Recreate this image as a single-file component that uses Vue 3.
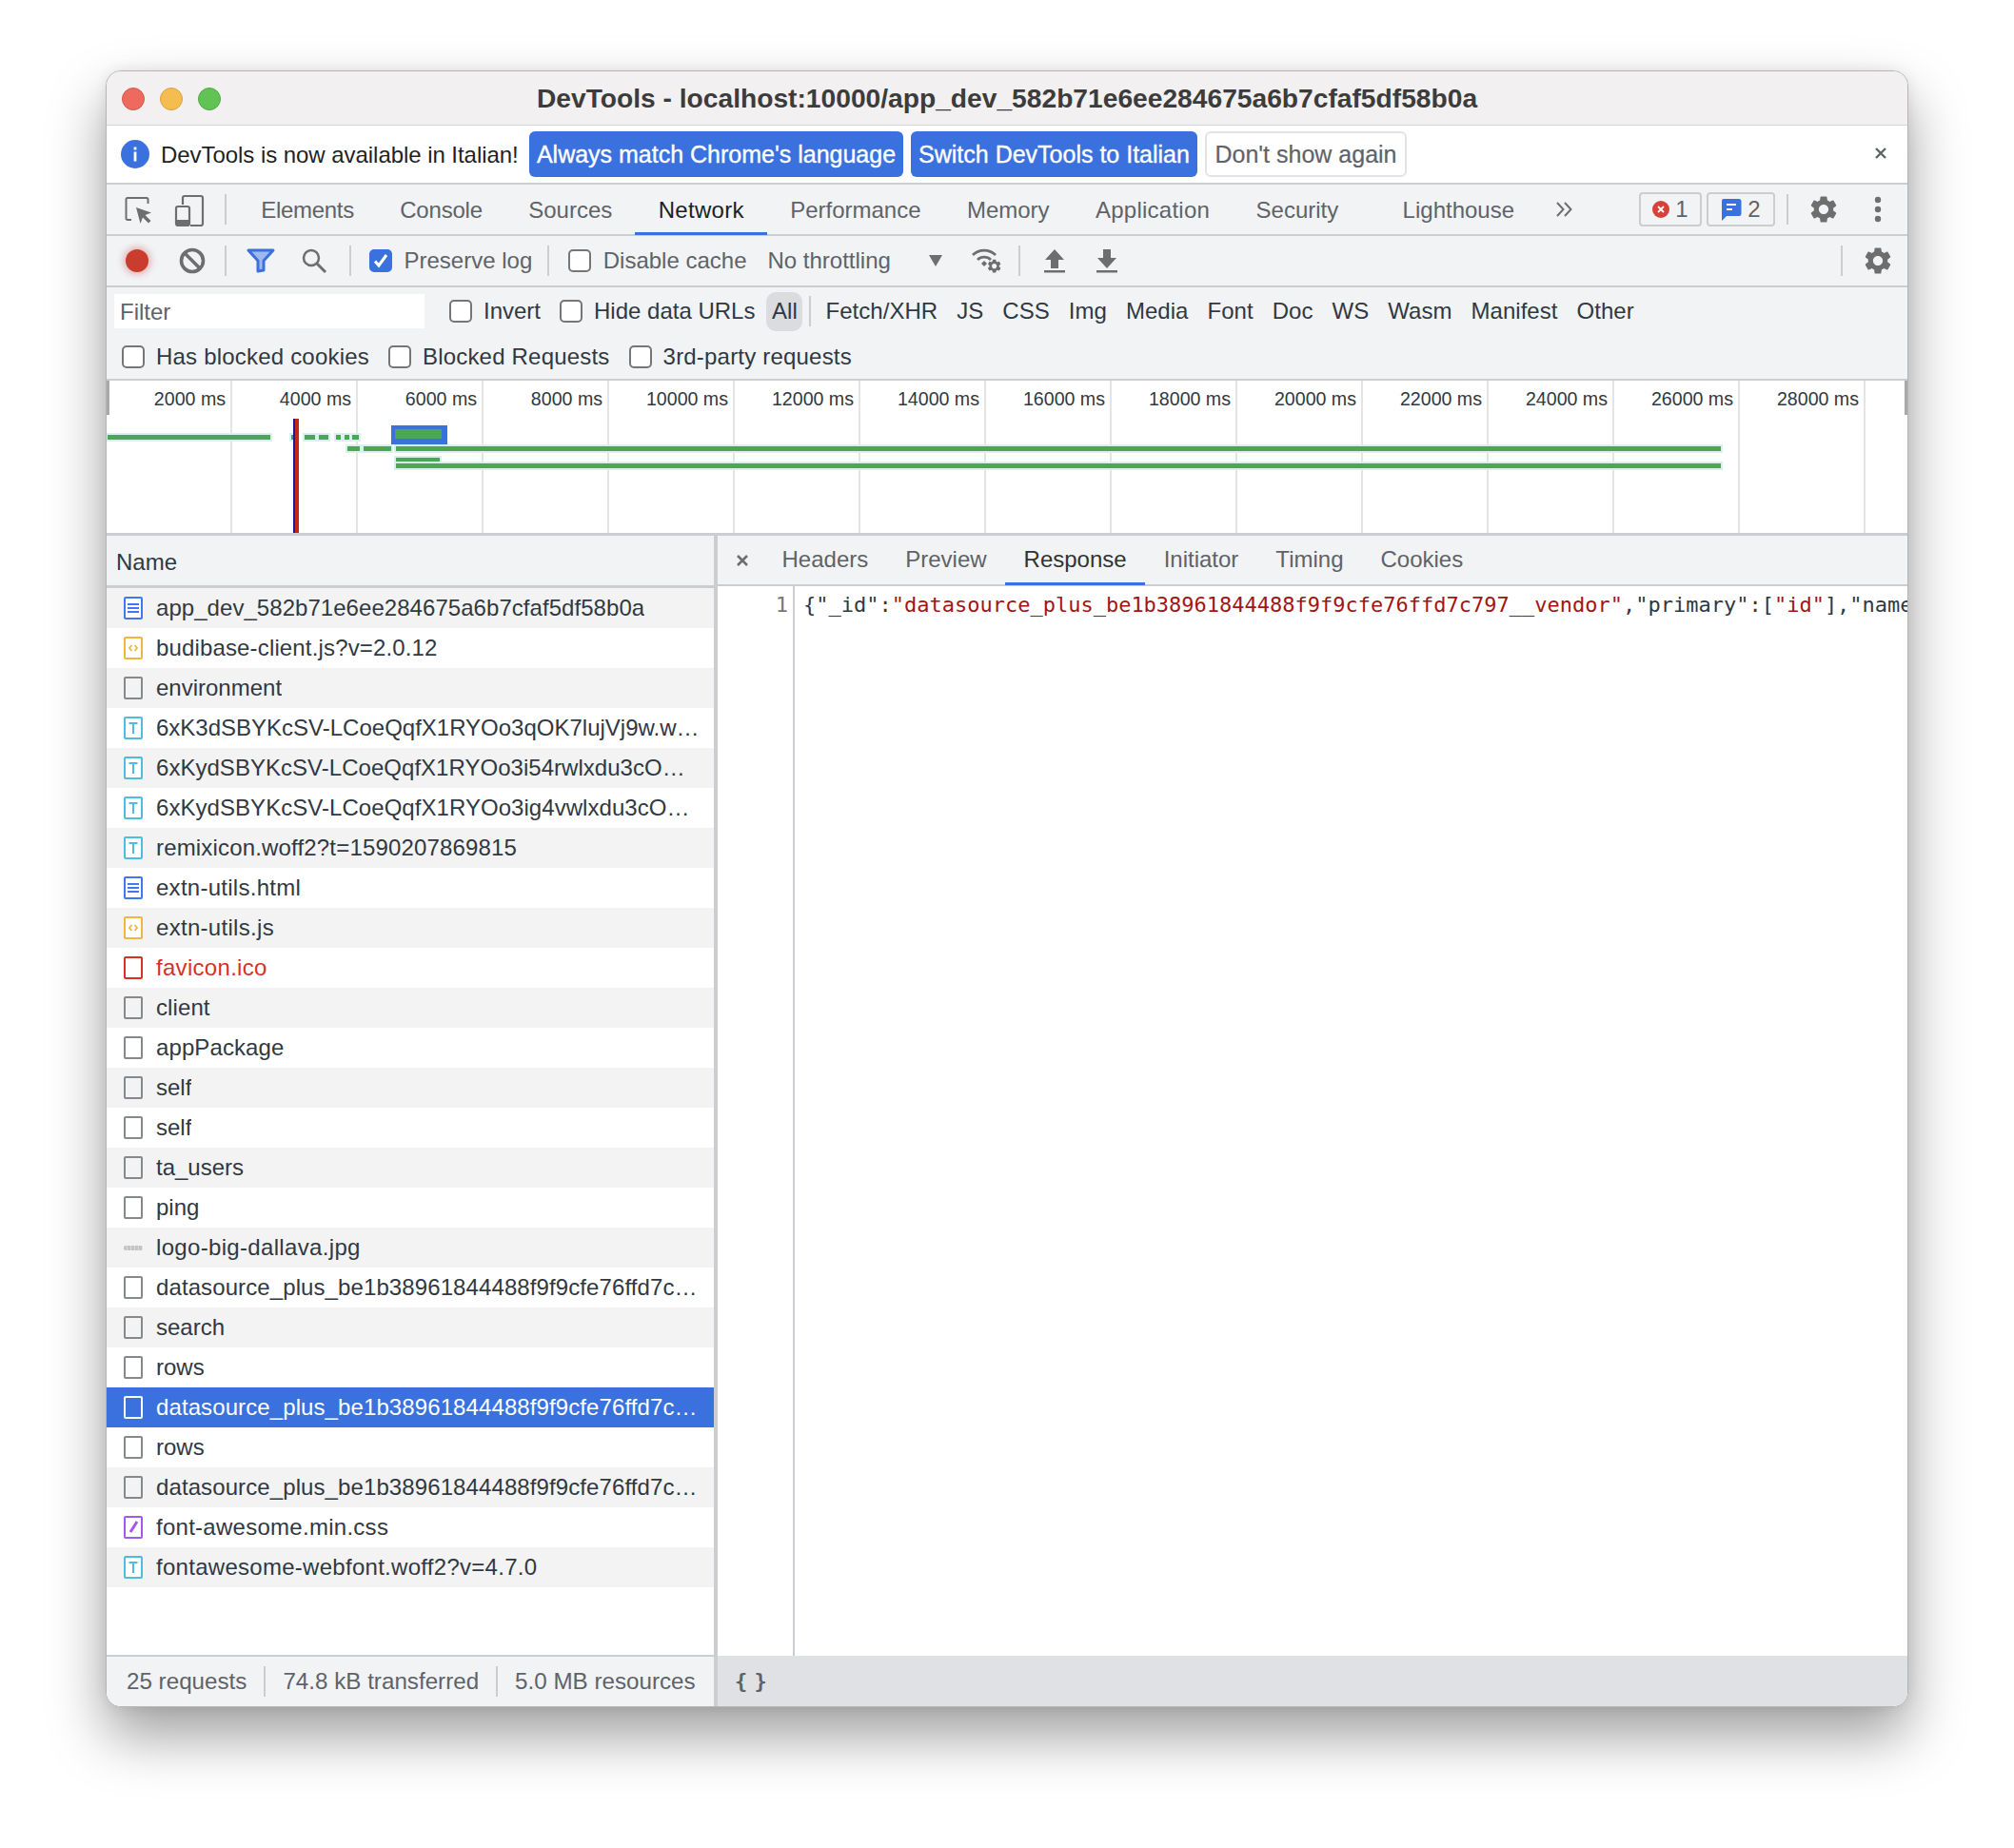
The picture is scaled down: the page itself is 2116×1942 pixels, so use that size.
<script setup>
const tabs = [
  { t: 'Elements', ls: -.3 }, { t: 'Console', ls: -.2 }, { t: 'Sources', ls: 0 }, { t: 'Network', on: true, ls: .3 },
  { t: 'Performance', ls: 0 }, { t: 'Memory', ls: 0 }, { t: 'Application', ls: .25 }, { t: 'Security', ls: 0 }, { t: 'Lighthouse', extra: true, ls: 0 }
]
const chips = ['Fetch/XHR', 'JS', 'CSS', 'Img', 'Media', 'Font', 'Doc', 'WS', 'Wasm', 'Manifest', 'Other']
const ticks = [2000, 4000, 6000, 8000, 10000, 12000, 14000, 16000, 18000, 20000, 22000, 24000, 26000, 28000]
const ds = 'datasource_plus_be1b38961844488f9f9cfe76ffd7c797__vendor'
const rows = [
  ['app_dev_582b71e6ee284675a6b7cfaf5df58b0a', 'doc', .05],
  ['budibase-client.js?v=2.0.12', 'js', .15],
  ['environment', 'plain', 0],
  ['6xK3dSBYKcSV-LCoeQqfX1RYOo3qOK7lujVj9w.woff2', 'font', 0],
  ['6xKydSBYKcSV-LCoeQqfX1RYOo3i54rwlxdu3cOWxw.woff2', 'font', .03],
  ['6xKydSBYKcSV-LCoeQqfX1RYOo3ig4vwlxdu3cOWxw.woff2', 'font', .05],
  ['remixicon.woff2?t=1590207869815', 'font', .17],
  ['extn-utils.html', 'doc', .27],
  ['extn-utils.js', 'js', .3],
  ['favicon.ico', 'err', .3],
  ['client', 'plain', .1],
  ['appPackage', 'plain', .1],
  ['self', 'plain', 0],
  ['self', 'plain', 0],
  ['ta_users', 'plain', 0],
  ['ping', 'plain', 0],
  ['logo-big-dallava.jpg', 'img', .33],
  [ds, 'plain', .1],
  ['search', 'plain', 0],
  ['rows', 'plain', 0],
  [ds, 'sel', .1],
  ['rows', 'plain', 0],
  [ds, 'plain', .1],
  ['font-awesome.min.css', 'css', .27],
  ['fontawesome-webfont.woff2?v=4.7.0', 'font', .28]
]
const bars = [
  { x: 1, y: 57, w: 171 },
  { x: 194, y: 57, w: 3 }, { x: 208, y: 57, w: 11 }, { x: 223, y: 57, w: 10 }, { x: 241, y: 57, w: 5 }, { x: 250, y: 57, w: 5 }, { x: 258, y: 57, w: 7 },
  { x: 253, y: 69, w: 13 }, { x: 270, y: 69, w: 29 }, { x: 304, y: 69, w: 1392 },
  { x: 304, y: 81, w: 46 }, { x: 304, y: 87, w: 1392 }
]
const bar = b => ({ left: b.x + 'px', top: b.y + 'px', width: b.w + 'px' })
const gear = 'M19.14 12.94c.04-.3.06-.61.06-.94 0-.32-.02-.64-.07-.94l2.03-1.58a.49.49 0 0 0 .12-.61l-1.92-3.32a.488.488 0 0 0-.59-.22l-2.39.96c-.5-.38-1.03-.7-1.62-.94l-.36-2.54a.484.484 0 0 0-.48-.41h-3.84c-.24 0-.43.17-.47.41l-.36 2.54c-.59.24-1.13.57-1.62.94l-2.39-.96c-.22-.08-.47 0-.59.22L2.74 8.87c-.12.21-.08.47.12.61l2.03 1.58c-.05.3-.09.63-.09.94s.02.64.07.94l-2.03 1.58a.49.49 0 0 0-.12.61l1.92 3.32c.12.22.37.29.59.22l2.39-.96c.5.38 1.03.7 1.62.94l.36 2.54c.05.24.24.41.48.41h3.84c.24 0 .44-.17.47-.41l.36-2.54c.59-.24 1.13-.56 1.62-.94l2.39.96c.22.08.47 0 .59-.22l1.92-3.32c.12-.22.07-.47-.12-.61l-2.01-1.58zM12 15.6c-1.98 0-3.6-1.62-3.6-3.6s1.62-3.6 3.6-3.6 3.6 1.62 3.6 3.6-1.62 3.6-3.6 3.6z'
</script>

<template>
  <div class="page">
    <div class="win">
      <div class="title">
        <div class="lights"><i class="l r"></i><i class="l y"></i><i class="l g"></i></div>
        <div class="title-text">DevTools - localhost:10000/app_dev_582b71e6ee284675a6b7cfaf5df58b0a</div>
      </div>

      <div class="info">
        <svg class="info-ic" width="30" height="30" viewBox="0 0 30 30"><circle cx="15" cy="15" r="15" fill="#3b71de"/><rect x="13.6" y="12.5" width="2.8" height="10" fill="#fff"/><rect x="13.6" y="7.5" width="2.8" height="3" fill="#fff"/></svg>
        <span class="info-text">DevTools is now available in Italian!</span>
        <span class="btn primary b1">Always match Chrome's language</span>
        <span class="btn primary b2">Switch DevTools to Italian</span>
        <span class="btn plain">Don't show again</span>
        <svg class="info-x" width="14" height="14" viewBox="0 0 14 14"><path d="M2 2l10 10M12 2L2 12" stroke="#5f6368" stroke-width="2.4"/></svg>
      </div>

      <div class="tabs">
        <svg class="ic-inspect" width="30" height="30" viewBox="0 0 30 30"><path d="M7 25H3a1.5 1.5 0 0 1-1.5-1.5V3.500A1.500 1.500 0 0 1 3 2h20a1.500 1.500 0 0 1 1.500 1.500V8" fill="none" stroke="#6e6e6e" stroke-width="2"/><path d="M12 12l16 5.500-6.500 2.500 6 6-2.500 2.500-6-6-2.500 6.500z" fill="#6e6e6e"/></svg>
        <svg class="ic-device" width="32" height="34" viewBox="0 0 32 34"><path d="M9 11V4a2 2 0 0 1 2-2h17a2 2 0 0 1 2 2v27a2 2 0 0 1-2 2H17" fill="none" stroke="#6e6e6e" stroke-width="2.200"/><rect x="2" y="13" width="14" height="20" rx="2" fill="none" stroke="#6e6e6e" stroke-width="2.200"/><rect x="2" y="27" width="14" height="6" fill="#6e6e6e"/></svg>
        <i class="sep first"></i>
        <div v-for="t in tabs" :key="t.t" class="tab" :class="{ on: t.on, extra: t.extra }" :style="{ letterSpacing: t.ls + 'px' }">{{ t.t }}</div>
        <svg class="more" width="20" height="18" viewBox="0 0 20 18"><path d="M2 2l6.500 7L2 16M10 2l6.500 7L10 16" fill="none" stroke="#6e6e6e" stroke-width="2"/></svg>
        <div class="tab-right">
          <span class="badge bd1">
            <svg width="18" height="18" viewBox="0 0 18 18"><circle cx="9" cy="9" r="9" fill="#d9403a"/><path d="M6 6l6 6M12 6l-6 6" stroke="#fff" stroke-width="1.800"/></svg>1
          </span>
          <span class="badge bd2">
            <svg width="22" height="24" viewBox="0 0 22 24"><path d="M3 1h16a2.500 2.500 0 0 1 2.500 2.500v13A2.500 2.500 0 0 1 19 19H6l-5 5V3a2 2 0 0 1 2-2z" fill="#3b71de"/><path d="M6 7h10M6 12h6" stroke="#fff" stroke-width="2"/></svg>2
          </span>
          <i class="sep rs"></i>
          <svg class="gear1" width="34" height="34" viewBox="0 0 24 24"><path :d="gear" fill="#6e6e6e"/></svg>
          <svg class="dots" width="8" height="28" viewBox="0 0 8 28"><circle cx="4" cy="4" r="3.200" fill="#6e6e6e"/><circle cx="4" cy="14" r="3.200" fill="#6e6e6e"/><circle cx="4" cy="24" r="3.200" fill="#6e6e6e"/></svg>
        </div>
      </div>

      <div class="tool">
        <span class="rec"></span>
        <svg class="clear" width="28" height="28" viewBox="0 0 28 28"><circle cx="14" cy="14" r="11.500" fill="none" stroke="#6e6e6e" stroke-width="3.600"/><path d="M6 6l16 16" stroke="#6e6e6e" stroke-width="3.600"/></svg>
        <i class="sep s1"></i>
        <svg class="funnel" width="30" height="26" viewBox="0 0 30 26"><path d="M2 2h26L18 13v10l-6 1V13z" fill="#9db9ee" stroke="#3b71de" stroke-width="3" stroke-linejoin="round"/></svg>
        <svg class="search" width="28" height="28" viewBox="0 0 28 28"><circle cx="11" cy="11" r="8" fill="none" stroke="#6e6e6e" stroke-width="2.500"/><path d="M17 17l9 9" stroke="#6e6e6e" stroke-width="3"/></svg>
        <i class="sep s2"></i>
        <span class="cb checked cb-pres"><svg width="20" height="20" viewBox="0 0 20 20"><path d="M4 10.500l4 4.500 8-11" fill="none" stroke="#fff" stroke-width="3"/></svg></span>
        <span class="tlabel">Preserve log</span>
        <i class="sep s3"></i>
        <span class="cb cb-dis"></span>
        <span class="tlabel">Disable cache</span>
        <span class="tlabel throttle">No throttling</span>
        <svg class="tri" width="14" height="12" viewBox="0 0 14 12"><path d="M0 0h14L7 12z" fill="#6e6e6e"/></svg>
        <svg class="wifi" width="34" height="30" viewBox="0 0 34 30"><path d="M2 9a17 17 0 0 1 24 0M7 14a10 10 0 0 1 14 0" fill="none" stroke="#6e6e6e" stroke-width="2.800"/><path d="M11 18l3-3 3 3-3 3z" fill="#6e6e6e"/><g transform="translate(16 12) scale(.72)"><path :d="gear" fill="#6e6e6e"/></g></svg>
        <i class="sep s4"></i>
        <svg class="up" width="22" height="26" viewBox="0 0 22 26"><path d="M11 1l10 11h-6v9H7v-9H1z" fill="#6e6e6e"/><rect x="0" y="23" width="22" height="2.500" fill="#6e6e6e"/></svg>
        <svg class="down" width="22" height="26" viewBox="0 0 22 26"><path d="M11 21L1 10h6V1h8v9h6z" fill="#6e6e6e"/><rect x="0" y="23" width="22" height="2.500" fill="#6e6e6e"/></svg>
        <div class="tool-right">
          <i class="sep"></i>
          <svg width="34" height="34" viewBox="0 0 24 24"><path :d="gear" fill="#6e6e6e"/></svg>
        </div>
      </div>

      <div class="filters">
        <div class="f-row f1">
          <div class="finput">Filter</div>
          <span class="cb cb-inv"></span><span class="flabel">Invert</span>
          <span class="cb cb-hide"></span><span class="flabel">Hide data URLs</span>
          <span class="all">All</span>
          <i class="sep fs"></i>
          <span v-for="c in chips" :key="c" class="chip">{{ c }}</span>
        </div>
        <div class="f-row f2">
          <span class="cb"></span><span class="flabel">Has blocked cookies</span>
          <span class="cb"></span><span class="flabel">Blocked Requests</span>
          <span class="cb"></span><span class="flabel">3rd-party requests</span>
        </div>
      </div>

      <div class="timeline">
        <div class="ticks">
          <div v-for="t in ticks" :key="t" class="tick">{{ t }} ms</div>
        </div>
        <i class="handle hl"></i><i class="handle hr"></i>
        <i v-for="(b, i) in bars" :key="i" class="bar" :style="bar(b)"></i>
        <i class="sel-box"><i class="sel-in"></i></i>
        <i class="mark"></i>
      </div>

      <div class="split">
        <div class="left">
          <div class="name-head">Name</div>
          <div class="list">
            <div v-for="(r, i) in rows" :key="i" class="row" :class="[r[1] === 'sel' ? 'selected' : '', r[1] === 'err' ? 'err' : '']">
              <span class="fi" :class="'fi-' + r[1]">
                <template v-if="r[1] === 'doc'"><i class="ln"></i><i class="ln"></i><i class="ln"></i></template>
                <template v-else-if="r[1] === 'js'"><svg width="10" height="8" viewBox="0 0 10 8"><path d="M3.500 1L1 4l2.500 3M6.500 1L9 4 6.500 7" fill="none" stroke="#efb73e" stroke-width="1.700"/></svg></template>
                <template v-else-if="r[1] === 'font'"><svg width="10" height="12" viewBox="0 0 10 12"><path d="M.5 1h9M5 1v11" fill="none" stroke="#4fbde0" stroke-width="2"/></svg></template>
                <template v-else-if="r[1] === 'css'"><svg width="14" height="18" viewBox="0 0 14 18"><path d="M11 3L4 14" stroke="#a259f0" stroke-width="3"/></svg></template>
              </span>
              <span class="nm" :style="{ letterSpacing: r[2] + 'px' }">{{ r[0] }}</span>
            </div>
          </div>
          <div class="foot-left">
            <span>25 requests</span><i class="fsep"></i>
            <span>74.8 kB transferred</span><i class="fsep"></i>
            <span>5.0 MB resources</span>
          </div>
        </div>
        <div class="divider"></div>
        <div class="right">
          <div class="d-tabs">
            <svg class="d-x" width="14" height="14" viewBox="0 0 14 14"><path d="M2 2l10 10M12 2L2 12" stroke="#6e6e6e" stroke-width="2.600"/></svg>
            <div class="d-tab">Headers</div>
            <div class="d-tab">Preview</div>
            <div class="d-tab on">Response</div>
            <div class="d-tab">Initiator</div>
            <div class="d-tab">Timing</div>
            <div class="d-tab">Cookies</div>
          </div>
          <div class="code">
            <div class="gutter">1</div>
            <div class="src">{"_id":<span class="str">"datasource_plus_be1b38961844488f9f9cfe76ffd7c797__vendor"</span>,"primary":[<span class="str">"id"</span>],"name":<span class="str">"vendor"</span></div>
          </div>
          <div class="foot-right">{ }</div>
        </div>
      </div>
    </div>
  </div>
</template>

<style>
html, body { margin: 0; background: #fff; }
</style>

<style scoped>
.page {
  width: 2116px;
  height: 1942px;
  box-sizing: border-box;
  padding: 74px 0 0 111px;
  font-family: "Liberation Sans", Arial, sans-serif;
  font-size: 24px;
  overflow: hidden;
}
.win {
  width: 1894px;
  height: 1720px;
  box-sizing: border-box;
  border: 1px solid #b5b5b5;
  border-radius: 16px;
  box-shadow: 0 30px 60px rgba(0, 0, 0, .38), 0 0 14px rgba(0, 0, 0, .08);
  display: flex;
  flex-direction: column;
  overflow: hidden;
  background: #f1f3f5;
}
i { display: block; font-style: normal; }
.sep { width: 2px; height: 32px; background: #cbcdd1; flex: none; }

.title {
  height: 57px;
  flex: none;
  box-sizing: border-box;
  background: #f2f0f0;
  border-bottom: 1px solid #d5d5d5;
  display: flex;
  align-items: center;
  justify-content: center;
  position: relative;
}
.lights { position: absolute; left: 16px; top: 17px; display: flex; gap: 16px; }
.l { width: 24px; height: 24px; border-radius: 50%; box-sizing: border-box; }
.r { background: #ee6a5e; border: 1px solid #d5574c; }
.y { background: #f5bd4f; border: 1px solid #d8a13f; }
.g { background: #61c354; border: 1px solid #52a945; }
.title-text { font-weight: 700; font-size: 28.200px; color: #3c3c3c; }

.info {
  height: 62px;
  flex: none;
  box-sizing: border-box;
  background: #fff;
  border-bottom: 2px solid #cbcdd1;
  display: flex;
  align-items: center;
  padding: 0 0 0 15px;
  position: relative;
}
.info-ic { flex: none; }
.info-text { margin-left: 12px; color: #1f1f1f; width: 387px; white-space: nowrap; padding-top: 1px; letter-spacing: -.05px; }
.btn { height: 48px; box-sizing: border-box; border-radius: 6px; display: flex; align-items: center; justify-content: center; white-space: nowrap; font-size: 25px; padding-top: 1px; }
.primary { background: #3b71de; color: #fff; -webkit-text-stroke: .35px #fff; }
.b1 { width: 393px; }
.b2 { width: 301px; margin-left: 8px; }
.plain { width: 212px; margin-left: 8px; background: #fff; border: 2px solid #e2e3e6; color: #5f6368; -webkit-text-stroke: .2px #5f6368; }
.info-x { position: absolute; right: 21px; top: 22px; }

.tabs {
  height: 54px;
  flex: none;
  box-sizing: border-box;
  border-bottom: 2px solid #cbcdd1;
  display: flex;
  align-items: center;
  padding-left: 19px;
}
.ic-inspect { flex: none; margin-top: 2px; }
.ic-device { flex: none; margin-left: 22px; margin-top: 2px; }
.sep.first { margin-left: 21px; margin-right: 12px; }
.tab { height: 52px; box-sizing: border-box; padding: 2px 24.200px 0; display: flex; align-items: center; color: #5f6368; border-bottom: 3px solid transparent; margin-bottom: -2px; }
.tab.on { color: #202124; border-bottom-color: #3b71de; }
.tab.extra { margin-left: 19px; }
.more { flex: none; margin-left: 19px; }
.tab-right { margin-left: auto; display: flex; align-items: center; padding-right: 27px; }
.badge { height: 36px; box-sizing: border-box; border: 2px solid #cbcdd1; border-radius: 4px; display: flex; align-items: center; justify-content: center; gap: 6px; color: #5f6368; }
.bd1 { width: 66px; }
.bd2 { width: 72px; margin-left: 5px; }
.sep.rs { margin-left: 12px; margin-right: 20px; }
.dots { margin-left: 36px; }
.gear1 { flex: none; }

.tool {
  height: 54px;
  flex: none;
  box-sizing: border-box;
  border-bottom: 2px solid #cbcdd1;
  display: flex;
  align-items: center;
  color: #5f6368;
  padding-left: 20px;
}
.rec { width: 24px; height: 24px; border-radius: 50%; background: #c93c2e; box-shadow: 0 0 6px 3px rgba(201, 60, 46, .3); flex: none; }
.clear { margin-left: 32px; flex: none; }
.sep.s1 { margin-left: 20px; }
.funnel { margin-left: 21px; flex: none; }
.search { margin-left: 27px; flex: none; }
.sep.s2 { margin-left: 23px; }
.cb { width: 24px; height: 24px; box-sizing: border-box; border: 2px solid #767676; border-radius: 5px; background: #fff; flex: none; display: block; }
.cb.checked { background: #3b71de; border-color: #3b71de; display: flex; align-items: center; justify-content: center; }
.cb-pres { margin-left: 19px; }
.tlabel { margin-left: 12.500px; white-space: nowrap; }
.sep.s3 { margin-left: 16px; }
.cb-dis { margin-left: 20px; }
.throttle { margin-left: 22px; }
.tri { margin-left: 40px; flex: none; }
.wifi { margin-left: 30px; flex: none; }
.sep.s4 { margin-left: 16px; }
.up { margin-left: 25px; flex: none; }
.down { margin-left: 33px; flex: none; }
.tool-right { margin-left: auto; display: flex; align-items: center; gap: 20px; padding-right: 14px; }

.filters { height: 98px; flex: none; box-sizing: border-box; border-bottom: 2px solid #cbcdd1; padding-top: 6px; color: #303942; }
.f-row { display: flex; align-items: center; white-space: nowrap; }
.f1 { height: 38px; padding-left: 8px; }
.f2 { height: 48px; padding-left: 16px; margin-top: 5px; letter-spacing: .2px; }
.finput { width: 326px; height: 36px; background: #fff; box-sizing: border-box; padding-left: 6px; line-height: 38px; color: #5f6368; flex: none; }
.cb-inv { margin-left: 26px; }
.cb-hide { margin-left: 20px; }
.flabel { margin-left: 12px; }
.f2 .flabel + .cb { margin-left: 20px; }
.all { margin-left: 12px; background: #dadce0; height: 41px; width: 38px; border-radius: 10px; display: flex; align-items: center; justify-content: center; }
.sep.fs { margin-left: 7px; margin-right: 5px; height: 32px; }
.chip { padding: 0 10px; letter-spacing: .04px; }

.timeline { height: 163px; flex: none; background: #fff; position: relative; box-sizing: border-box; border-bottom: 3px solid #cbcdd1; overflow: hidden; }
.ticks { display: flex; height: 100%; padding-left: 0; }
.tick { width: 132px; flex: none; box-sizing: border-box; border-right: 2px solid #e4e4e4; text-align: right; padding: 6px 5px 0 0; font-size: 19.600px; line-height: 26px; color: #303942; }
.handle { position: absolute; top: 0; width: 3px; height: 36px; background: #a9a9a9; }
.hl { left: 0; }
.hr { right: 0; }
.bar { position: absolute; height: 5px; background: #4aa754; box-shadow: 0 0 0 2px #d8f0ee; }
.sel-box { position: absolute; left: 299px; top: 47px; width: 59px; height: 20px; box-sizing: border-box; background: #3b71de; padding: 4px; }
.sel-in { width: 49px; height: 10px; background: #4aa754; }
.mark { position: absolute; left: 196px; top: 40px; width: 6px; height: 120px; background: linear-gradient(90deg, #1a1a9c 0 2px, #c0281c 2px); }

.split { flex: 1; min-height: 0; display: flex; }
.left { width: 638px; flex: none; display: flex; flex-direction: column; background: #fff; }
.divider { width: 4px; flex: none; background: #cbcdd1; }
.name-head { height: 55px; flex: none; box-sizing: border-box; background: #f1f3f5; border-bottom: 3px solid #cbcdd1; padding: 4px 0 0 10px; display: flex; align-items: center; color: #303942; }
.list { flex: 1; min-height: 0; }
.row { height: 42px; display: flex; align-items: center; padding: 0 12px 0 18px; color: #303942; }
.row:nth-child(odd) { background: #f3f3f3; }
.row.selected { background: #3b71de; color: #fff; }
.row.err { color: #d93025; }
.nm { margin-left: 14px; white-space: nowrap; overflow: hidden; text-overflow: ellipsis; min-width: 0; }
.fi { width: 20px; height: 24px; box-sizing: border-box; border: 2px solid #85888c; border-radius: 2px; flex: none; display: flex; flex-direction: column; align-items: center; justify-content: center; gap: 2px; }
.fi-doc { border-color: #3f78f0; background: #fff; }
.ln { width: 12px; height: 2px; background: #3f78f0; }
.fi-js { border-color: #efb73e; background: #fff; }
.fi-font { border-color: #4fbde0; background: #fff; }
.fi-css { border-color: #a259f0; background: #fff; }
.fi-err { border-color: #d93025; background: #fff; }
.fi-sel { border-color: #fff; }
.fi-img { border: 0; height: 5px; background: repeating-linear-gradient(90deg, #c4c4c4 0 3px, #dcdcdc 3px 4px); }
.foot-left { height: 54px; flex: none; box-sizing: border-box; background: #f1f3f5; border-top: 2px solid #cbcdd1; display: flex; align-items: center; padding-left: 21px; color: #5f6368; white-space: nowrap; font-size: 24.200px; }
.fsep { width: 2px; height: 32px; background: #cbcdd1; margin: 0 18px; flex: none; }

.right { flex: 1; min-width: 0; display: flex; flex-direction: column; background: #fff; }
.d-tabs { height: 53px; flex: none; box-sizing: border-box; background: #f1f3f5; border-bottom: 2px solid #cbcdd1; display: flex; align-items: center; padding-left: 19px; }
.d-x { flex: none; margin-right: 15px; }
.d-tab { height: 51px; box-sizing: border-box; padding: 0 19.500px; display: flex; align-items: center; color: #5f6368; border-bottom: 3px solid transparent; margin-bottom: -2px; }
.d-tab.on { color: #333; border-bottom-color: #3b71de; }
.code { flex: 1; min-height: 0; display: flex; font-family: "DejaVu Sans Mono", monospace; font-size: 22px; overflow: hidden; }
.gutter { width: 81px; box-sizing: border-box; flex: none; border-right: 2px solid #cbcdd1; text-align: right; padding: 7px 5px 0 0; color: #777; line-height: 26px; }
.src { padding: 7px 0 0 9px; line-height: 26px; white-space: nowrap; color: #303942; }
.str { color: #a31515; }
.foot-right { height: 53px; flex: none; background: #dfe1e5; display: flex; align-items: center; padding-left: 18px; color: #5f6368; font-weight: 700; font-family: "DejaVu Sans Mono", monospace; font-size: 22px; letter-spacing: -3px; }
</style>
